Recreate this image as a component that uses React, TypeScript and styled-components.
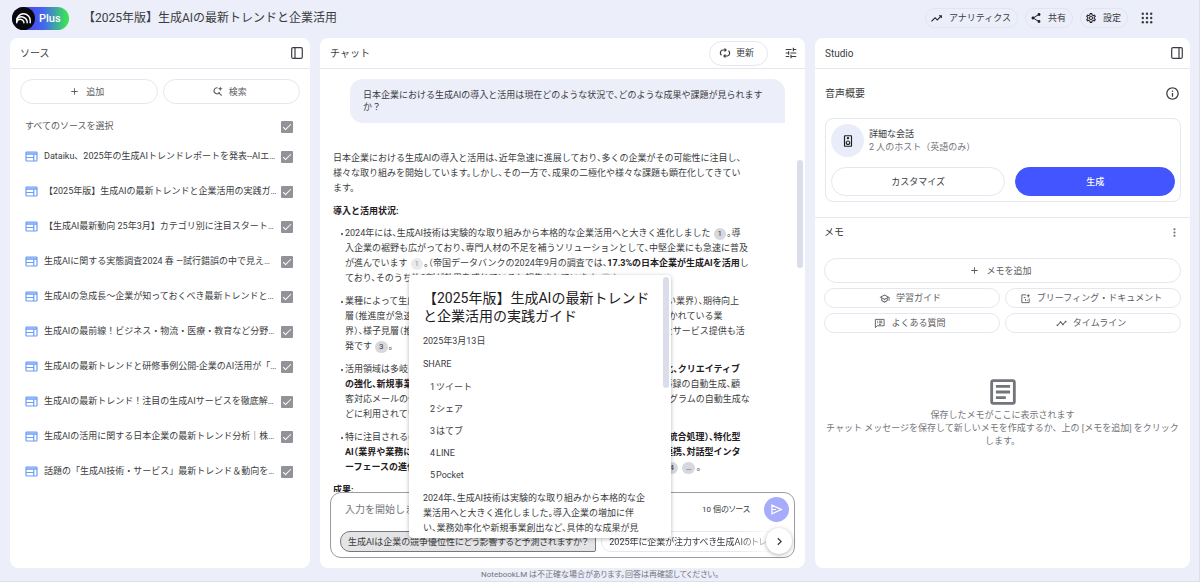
import React from "react";
import styled, { createGlobalStyle, css } from "styled-components";
import {
  MdAdd,
  MdChevronRight,
  MdInfoOutline,
  MdMoreVert,
  MdOutlineArticle,
  MdOutlineSchool,
  MdOutlineSettings,
  MdOutlineSpeaker,
  MdShare,
  MdTimeline,
  MdTrendingUp,
  MdTune,
} from "react-icons/md";

const color = {
  page: "#eceefa",
  panel: "#ffffff",
  line: "#e6e7ee",
  text: "#3b3c40",
  strong: "#1f2023",
  soft: "#5c5d61",
  muted: "#74757a",
  accent: "#4255ff",
  thumb: "#dbdeea",
};

const GlobalStyle = createGlobalStyle`
  *, *::before, *::after { box-sizing: border-box; }
  body {
    margin: 0;
    background: ${color.page};
    color: ${color.text};
    font-family: Roboto, "Noto Sans CJK JP", sans-serif;
    font-size: 9px;
    line-height: 15px;
  }
  button, input, textarea { font: inherit; color: inherit; font-feature-settings: inherit; }
  h1, h2, h3, p, ul, ol { margin: 0; padding: 0; font-weight: 400; }
  ul, ol { list-style: none; }
  svg { display: block; flex: none; }
`;

/* Running text sets its punctuation at half width. */
const compactPunctuation = css`
  font-feature-settings: "halt";
`;

const Page = styled.div`
  display: flex;
  flex-direction: column;
  height: 100vh;
  padding: 0 9px 0 10px;
  border-right: 1px solid #dddfe9;
  border-bottom: 1px solid #dddfe9;
`;

const TopBar = styled.header`
  display: flex;
  align-items: center;
  flex: none;
  height: 38px;
  padding: 0 37px 2px 2px;
`;

const Brand = styled.div`
  display: flex;
  align-items: center;
  width: 57px;
  height: 23px;
  border-radius: 12px;
  background: linear-gradient(90deg, #4a4ff0 35%, #4566ee 55%, #3ea3a8 75%, #3be05a 95%);
  color: #fff;
  font-size: 11px;
  font-weight: 500;
  gap: 4px;
`;

const Title = styled.h1`
  flex: 1;
  margin-left: 14px;
  font-size: 12px;
  line-height: 18px;
`;

const TopActions = styled.div`
  display: flex;
  align-items: center;
  gap: 7px;
`;

const IconButton = styled.button`
  display: grid;
  place-items: center;
  padding: 0;
  border: 0;
  background: none;
  cursor: pointer;
`;

const AppsButton = styled(IconButton)`
  margin-left: 6px;
`;

const Pill = styled.button<{ $height?: number; $tint?: boolean; $soft?: boolean }>`
  display: flex;
  align-items: center;
  justify-content: center;
  gap: 6px;
  height: ${(p) => p.$height ?? 25}px;
  padding: 0 8px 0 4px;
  border: 1px solid ${(p) => (p.$tint ? "#e2e4f1" : color.line)};
  border-radius: 15px;
  background: ${(p) => (p.$tint ? "transparent" : color.panel)};
  color: ${(p) => (p.$soft ? color.soft : color.text)};
  line-height: 12px;
  white-space: nowrap;
  cursor: pointer;
`;

const TopPill = styled(Pill)`
  padding: 0 6px 0 4px;

  svg { color: ${color.strong}; }
`;

const RefreshPill = styled(Pill)`
  gap: 5px;
  padding: 0 13px 0 9px;
`;

const Columns = styled.main`
  display: grid;
  grid-template-columns: 300fr 485fr 375fr;
  gap: 10px;
  flex: 1;
  min-height: 0;
`;

const Panel = styled.section`
  position: relative;
  display: flex;
  flex-direction: column;
  min-width: 0;
  min-height: 0;
  border-radius: 8px;
  background: ${color.panel};
`;

const PanelHeader = styled.header`
  display: flex;
  align-items: center;
  flex: none;
  gap: 16px;
  height: 31px;
  padding: 0 7px 0 10px;
  border-bottom: 1px solid ${color.line};
`;

const PanelTitle = styled.h2`
  flex: 1;
  font-size: 10px;
  color: ${color.text};
`;

const SourceActions = styled.div`
  display: grid;
  grid-template-columns: 1fr 1fr;
  gap: 5px;
  padding: 10px 10px 0;
`;

const SourceLabel = styled.label`
  display: flex;
  align-items: center;
  height: 35px;
  padding: 0 17px 0 15px;

  svg { margin-right: 6px; }
`;

const SelectAll = styled(SourceLabel)`
  height: 25px;
  margin-top: 10px;
  color: ${color.soft};
`;

const SourceName = styled.span`
  flex: 1;
  overflow: hidden;
  white-space: nowrap;
`;

const Check = styled.input`
  display: grid;
  place-items: center;
  flex: none;
  width: 12px;
  height: 12px;
  margin: 0;
  border-radius: 1px;
  appearance: none;
  background: #929398;

  &:checked::after {
    content: "";
    width: 8px;
    height: 4px;
    margin-top: -2px;
    border-left: 1px solid #fff;
    border-bottom: 1px solid #fff;
    transform: rotate(-45deg);
  }
`;

const ChatScroll = styled.div`
  flex: 1;
  min-height: 0;
  overflow: hidden;
  padding: 10px 20px 0 13px;
  ${compactPunctuation}
`;

const UserMessage = styled.p`
  margin-left: 17px;
  padding: 10px 13px;
  border-radius: 13px 13px 1px 13px;
  background: ${color.page};
  line-height: 12px;
  white-space: nowrap;
`;

const Answer = styled.div`
  display: flex;
  flex-direction: column;
  gap: 8px;
  margin-top: 28px;
  color: ${color.text};
  white-space: nowrap;

  strong, h3 {
    font-size: 9px;
    font-weight: 700;
    color: ${color.strong};
  }
`;

const Bullets = styled.ul`
  display: flex;
  flex-direction: column;
  gap: 8px;
  margin-top: -1px;
`;

const Bullet = styled.li`
  display: grid;
  grid-template-columns: 4px 1fr;
  padding-left: 8px;

  &::before {
    content: "";
    width: 2px;
    height: 2px;
    margin-top: 7px;
    border-radius: 1px;
    background: ${color.text};
  }
`;

const Cite = styled.sup<{ $faded?: boolean }>`
  display: inline-block;
  min-width: 12px;
  height: 12px;
  margin: 0 1px 0 3px;
  padding: 0 4px;
  border-radius: 6px;
  background: ${(p) => (p.$faded ? "#e9eaec" : "#d7d8de")};
  color: ${(p) => (p.$faded ? "#9a9ba0" : color.text)};
  font-size: 8px;
  line-height: 12px;
  text-align: center;
  vertical-align: middle;
`;

const ScrollThumb = styled.div<{ $top: number; $height: number; $right: number }>`
  position: absolute;
  top: ${(p) => p.$top}px;
  right: ${(p) => p.$right}px;
  width: 6px;
  height: ${(p) => p.$height}px;
  border-radius: 3px;
  background: ${color.thumb};
`;

const Composer = styled.form`
  display: flex;
  flex-direction: column;
  justify-content: space-between;
  flex: none;
  height: 66px;
  margin: 0 10px 10px;
  padding: 4px 0 5px;
  border: 1px solid #9b9ca1;
  border-radius: 11px;
  background: ${color.panel};
`;

const ComposerRow = styled.div`
  display: flex;
  align-items: center;
  gap: 14px;
  padding: 0 5px 0 14px;
`;

const PromptInput = styled.input`
  flex: 1;
  min-width: 0;
  padding: 0;
  border: 0;
  outline: 0;
  font-size: 10px;
  background: none;

  &::placeholder { color: ${color.muted}; }
`;

const SourceCount = styled.span`
  font-size: 8px;
  font-feature-settings: "palt";
`;

const SendButton = styled(IconButton)`
  width: 25px;
  height: 25px;
  border-radius: 50%;
  background: #a7abfb;
  color: #fff;
`;

const Suggestions = styled.div`
  position: relative;
  display: flex;
  gap: 5px;
  margin: 0 1px 0 9px;
  font-feature-settings: "palt";
`;

const Suggestion = styled.button<{ $active?: boolean }>`
  flex: none;
  height: 21px;
  padding: 0 7px;
  border: 1px solid ${color.line};
  border-radius: 10px;
  background: ${color.panel};
  line-height: 12px;
  white-space: nowrap;
  cursor: pointer;

  ${(p) =>
    p.$active &&
    css`
      border-color: #77787d;
      border-radius: 10px 2px 2px 10px;
      background: #e4e4e6;
    `}
`;

const SuggestionClip = styled.div`
  display: flex;
  flex: 1;
  min-width: 0;
  overflow: hidden;
  mask-image: linear-gradient(90deg, #000 70%, transparent 92%);
`;

const NextButton = styled(IconButton)`
  position: absolute;
  right: 1px;
  top: -3px;
  width: 26px;
  height: 26px;
  border-radius: 50%;
  background: ${color.panel};
  box-shadow: 0 1px 4px rgba(0, 0, 0, 0.3);
`;

const Popover = styled.aside`
  position: absolute;
  left: 89px;
  top: 237px;
  width: 262px;
  height: 263px;
  padding: 14px 14px 0;
  overflow: hidden;
  border-radius: 4px;
  background: ${color.panel};
  box-shadow: 0 1px 4px rgba(0, 0, 0, 0.28);
  white-space: nowrap;
`;

const PopoverTitle = styled.h3`
  margin-bottom: 9px;
  font-size: 14px;
  line-height: 18px;
  color: ${color.strong};
`;

const PopoverBody = styled.div`
  display: flex;
  flex-direction: column;
  gap: 8px;
  ${compactPunctuation}
`;

const ShareList = styled.ol`
  display: flex;
  flex-direction: column;
  gap: 7px;
  padding-left: 7px;
`;

const ShareItem = styled.li`
  display: flex;
  gap: 1px;
`;

const Overview = styled.div`
  flex: none;
  padding: 17px 9px 15px 10px;
  border-bottom: 1px solid ${color.line};
`;

const SectionHead = styled.div<{ $inset?: number }>`
  display: flex;
  align-items: center;
  justify-content: space-between;
  padding-right: ${(p) => p.$inset ?? 0}px;
`;

const AudioCard = styled.div`
  display: flex;
  flex-direction: column;
  gap: 10px;
  margin-top: 17px;
  padding: 5px;
  border: 1px solid ${color.line};
  border-radius: 8px;
`;

const AudioInfo = styled.div`
  display: flex;
  align-items: center;
  gap: 5px;
  line-height: 13px;
`;

const AudioBadge = styled.div`
  display: grid;
  place-items: center;
  width: 33px;
  height: 33px;
  border-radius: 50%;
  background: #e9edf9;
  color: ${color.strong};
`;

const AudioMeta = styled.p`
  color: ${color.muted};
`;

const AudioButtons = styled.div`
  display: grid;
  grid-template-columns: 175fr 160fr;
  gap: 10px;
`;

const WidePill = styled(Pill)`
  padding: 0 4px;
`;

const PrimaryPill = styled(WidePill)`
  border-color: ${color.accent};
  background: ${color.accent};
  color: #fff;
  font-weight: 500;
`;

const Notes = styled.div`
  display: flex;
  flex-direction: column;
  padding: 7px 9px 0;
`;

const NoteButtons = styled.div`
  display: grid;
  grid-template-columns: 1fr 1fr;
  gap: 5px;
  margin-top: 18px;
`;

const AddNote = styled(Pill)`
  grid-column: 1 / -1;
`;

const EmptyNotes = styled.div`
  display: flex;
  flex-direction: column;
  align-items: center;
  margin-top: 42px;
  color: ${color.muted};
  line-height: 13px;
  text-align: center;
  white-space: nowrap;
`;

const Disclaimer = styled.footer`
  flex: none;
  height: 13px;
  font-size: 8px;
  line-height: 14px;
  text-align: center;
  color: ${color.muted};
  font-feature-settings: "palt";
`;

const LogoMark = () => (
  <svg width="23" height="23" viewBox="0 0 24 24" fill="none" stroke="#fff" strokeWidth="1.5" strokeLinecap="round">
    <circle cx="12" cy="12" r="12" fill="#08090c" stroke="none" />
    <path d="M5 16.500v-2.500a7 7 0 0 1 14 0v2.500" />
    <path d="M5 12.500a6.200 6.200 0 0 1 10.800 2.500v1.500" />
    <path d="M5 15a4 4 0 0 1 7.400 .8v.7" />
  </svg>
);

const PanelIcon = ({ side }: { side: "left" | "right" }) => (
  <svg width="12" height="12" viewBox="0 0 12 12" fill="none" stroke="#3b3c40" strokeWidth="1.2">
    <rect x="0.7" y="0.7" width="10.6" height="10.6" rx="1.2" />
    <path d={side === "left" ? "M4 1v10" : "M8 1v10"} />
  </svg>
);

const AppsIcon = () => (
  <svg width="12" height="12" viewBox="0 0 12 12" fill="#3b3c40">
    {[1.8, 6, 10.2].map((y) => [1.8, 6, 10.2].map((x) => <circle key={`${x}-${y}`} cx={x} cy={y} r="1.2" />))}
  </svg>
);

const WebIcon = () => (
  <svg width="13" height="13" viewBox="0 0 26 26" fill="none" stroke="#6b9df5" strokeWidth="2.4">
    <rect x="2" y="4" width="22" height="18" rx="1.500" />
    <path d="M2 6h22M2 8.500h22" />
    <path d="M2 15h15M17.500 9v13" />
  </svg>
);

const SparkSearchIcon = () => (
  <svg width="11" height="11" viewBox="0 0 24 24" fill="none" stroke="currentColor" strokeWidth="2.4">
    <path d="M12 4a6.5 6.5 0 1 0 4.600 9.500M14 14l7 7" />
    <path d="M18 1l1.400 3.600L23 6l-3.600 1.400L18 11l-1.400-3.600L13 6l3.600-1.400z" fill="currentColor" stroke="none" />
  </svg>
);

const RefreshIcon = () => (
  <svg width="12" height="12" viewBox="0 0 24 24" fill="none" stroke="currentColor" strokeWidth="2.4">
    <path d="M5 16.500A6 6 0 0 1 7 6h5M19 7.500A6 6 0 0 1 17 18h-5" />
    <path d="M11 1.500l5 4.500-5 4.500zM13 13.500l-5 4.500 5 4.500z" fill="currentColor" stroke="none" />
  </svg>
);

const SendIcon = () => (
  <svg width="13" height="13" viewBox="0 0 24 24" fill="none" stroke="currentColor" strokeWidth="2.2">
    <path d="M3.500 4L21 12 3.500 20zM3.500 12H11" />
  </svg>
);

const BriefIcon = () => (
  <svg width="11" height="11" viewBox="0 0 24 24" fill="none" stroke="currentColor" strokeWidth="2">
    <path d="M13 4H4v17h16v-9M8 10h4M12 17v-4M16 17v-2" />
    <path d="M18 1l1.300 3.700L23 6l-3.700 1.300L18 11l-1.300-3.700L13 6l3.700-1.300z" fill="currentColor" stroke="none" />
  </svg>
);

const FaqIcon = () => (
  <svg width="11" height="11" viewBox="0 0 24 24" fill="none" stroke="currentColor" strokeWidth="2">
    <path d="M3 21V3h19v14H7zM7 7h2M11 7h7M7 10.500h2M11 10.500h7M11 14h4" />
  </svg>
);

const sources = [
  "Dataiku、2025年の生成AIトレンドレポートを発表--AIエ…",
  "【2025年版】生成AIの最新トレンドと企業活用の実践ガ…",
  "【生成AI最新動向 25年3月】カテゴリ別に注目スタート…",
  "生成AIに関する実態調査2024 春 ―試行錯誤の中で見え…",
  "生成AIの急成長～企業が知っておくべき最新トレンドと…",
  "生成AIの最前線！ビジネス・物流・医療・教育など分野…",
  "生成AIの最新トレンドと研修事例公開-企業のAI活用が「…",
  "生成AIの最新トレンド！注目の生成AIサービスを徹底解…",
  "生成AIの活用に関する日本企業の最新トレンド分析｜株…",
  "話題の「生成AI技術・サービス」最新トレンド＆動向を…",
];

const shares = ["ツイート", "シェア", "はてブ", "LINE", "Pocket"];

const SourcesPanel = () => (
  <Panel>
    <PanelHeader>
      <PanelTitle>ソース</PanelTitle>
      <IconButton aria-label="ソースを閉じる"><PanelIcon side="left" /></IconButton>
    </PanelHeader>
    <SourceActions>
      <Pill $soft><MdAdd size={11} />追加</Pill>
      <Pill $soft><SparkSearchIcon />検索</Pill>
    </SourceActions>
    <SelectAll>
      <SourceName>すべてのソースを選択</SourceName>
      <Check type="checkbox" defaultChecked />
    </SelectAll>
    <ul>
      {sources.map((name) => (
        <li key={name}>
          <SourceLabel>
            <WebIcon />
            <SourceName>{name}</SourceName>
            <Check type="checkbox" defaultChecked />
          </SourceLabel>
        </li>
      ))}
    </ul>
  </Panel>
);

const ChatPanel = () => (
  <Panel>
    <PanelHeader>
      <PanelTitle>チャット</PanelTitle>
      <RefreshPill><RefreshIcon />更新</RefreshPill>
      <IconButton aria-label="チャットの設定"><MdTune size={14} /></IconButton>
    </PanelHeader>
    <ChatScroll>
      <UserMessage>
        日本企業における生成AIの導入と活用は現在どのような状況で、どのような成果や課題が見られます<br />か？
      </UserMessage>
      <Answer>
        <p>
          日本企業における生成AIの導入と活用は、近年急速に進展しており、多くの企業がその可能性に注目し、<br />
          様々な取り組みを開始しています。しかし、その一方で、成果の二極化や様々な課題も顕在化してきてい<br />
          ます。
        </p>
        <h3>導入と活用状況:</h3>
        <Bullets>
          <Bullet>
            <div>
              2024年には、生成AI技術は実験的な取り組みから本格的な企業活用へと大きく進化しました<Cite>1</Cite>。導<br />
              入企業の裾野も広がっており、専門人材の不足を補うソリューションとして、中堅企業にも急速に普及<br />
              が進んでいます<Cite $faded>1</Cite>。（帝国データバンクの2024年9月の調査では、<strong>17.3%の日本企業が生成AIを活用</strong>し<br />
              ており、そのうち約9割が効果を感じていると報告されています<Cite>2</Cite>）。
            </div>
          </Bullet>
          <Bullet>
            <div>
              業種によって生成AIの導入状況は異なり、先行層（推進度が高くて市場の期待も高い業界）、期待向上<br />
              層（推進度が急速に高まる業界）、二極化層（活用度合いの差により期待度が引き裂かれている業<br />
              界）、様子見層（推進度も期待も低い業界群）に分類されて、さらに各業界に特化したサービス提供も活<br />
              発です<Cite>3</Cite>。
            </div>
          </Bullet>
          <Bullet>
            <div>
              活用領域は多岐にわたり、<strong>業務の効率化、顧客体験の向上、意思決定の迅速な高度化、クリエイティブ</strong><br />
              <strong>の強化、新規事業の創出</strong>など多くの業務領域が挙げられます。より具体的には、議事録の自動生成、顧<br />
              客対応メールの作成、広告作成、膨大な社内文書の検索や要約、多言語の翻訳、プログラムの自動生成な<br />
              どに利用されています。
            </div>
          </Bullet>
          <Bullet>
            <div>
              特に注目されるのは、<strong>マルチモーダルAI（静止画や音声、動画、テキスト情報などの統合処理）、特化型</strong><br />
              <strong>AI（業界や業務に特化した高精度なモデル）、自律型エージェントや外部ツール間連携、対話型インタ</strong><br />
              <strong>ーフェースの進化</strong>など、企業活用を支える新しい技術の動きが見られることです<Cite>4</Cite><Cite>…</Cite>。
            </div>
          </Bullet>
        </Bullets>
        <h3>成果:</h3>
      </Answer>
    </ChatScroll>
    <Composer onSubmit={(e) => e.preventDefault()}>
      <ComposerRow>
        <PromptInput aria-label="メッセージ" placeholder="入力を開始します…" />
        <SourceCount>10 個のソース</SourceCount>
        <SendButton aria-label="送信"><SendIcon /></SendButton>
      </ComposerRow>
      <Suggestions>
        <Suggestion type="button" $active>生成AIは企業の競争優位性にどう影響すると予測されますか？</Suggestion>
        <SuggestionClip>
          <Suggestion type="button">2025年に企業が注力すべき生成AIのトレンド</Suggestion>
        </SuggestionClip>
        <NextButton type="button" aria-label="次へ"><MdChevronRight size={15} /></NextButton>
      </Suggestions>
    </Composer>
    <ScrollThumb $top={122} $height={108} $right={2} />
    <Popover>
      <PopoverTitle>【2025年版】生成AIの最新トレンド<br />と企業活用の実践ガイド</PopoverTitle>
      <PopoverBody>
        <p>2025年3月13日</p>
        <p>SHARE</p>
        <ShareList>
          {shares.map((label, i) => (
            <ShareItem key={label}><span>{i + 1}</span><span>{label}</span></ShareItem>
          ))}
        </ShareList>
        <p>
          2024年、生成AI技術は実験的な取り組みから本格的な企<br />
          業活用へと大きく進化しました。導入企業の増加に伴<br />
          い、業務効率化や新規事業創出など、具体的な成果が見
        </p>
      </PopoverBody>
      <ScrollThumb $top={2} $height={111} $right={2} />
    </Popover>
  </Panel>
);

const StudioPanel = () => (
  <Panel>
    <PanelHeader>
      <PanelTitle>Studio</PanelTitle>
      <IconButton aria-label="Studio を閉じる"><PanelIcon side="right" /></IconButton>
    </PanelHeader>
    <Overview>
      <SectionHead $inset={1}>
        <PanelTitle as="h3">音声概要</PanelTitle>
        <IconButton aria-label="詳細"><MdInfoOutline size={15} /></IconButton>
      </SectionHead>
      <AudioCard>
        <AudioInfo>
          <AudioBadge><MdOutlineSpeaker size={14} /></AudioBadge>
          <div>
            <p>詳細な会話</p>
            <AudioMeta>2 人のホスト（英語のみ）</AudioMeta>
          </div>
        </AudioInfo>
        <AudioButtons>
          <WidePill $height={29}>カスタマイズ</WidePill>
          <PrimaryPill $height={29}>生成</PrimaryPill>
        </AudioButtons>
      </AudioCard>
    </Overview>
    <Notes>
      <SectionHead>
        <PanelTitle as="h3">メモ</PanelTitle>
        <IconButton aria-label="その他"><MdMoreVert size={13} color={color.muted} /></IconButton>
      </SectionHead>
      <NoteButtons>
        <AddNote $soft><MdAdd size={11} />メモを追加</AddNote>
        <Pill $soft $height={20}><MdOutlineSchool size={11} />学習ガイド</Pill>
        <Pill $soft $height={20}><BriefIcon />ブリーフィング・ドキュメント</Pill>
        <Pill $soft $height={20}><FaqIcon />よくある質問</Pill>
        <Pill $soft $height={20}><MdTimeline size={11} />タイムライン</Pill>
      </NoteButtons>
      <EmptyNotes>
        <MdOutlineArticle size={34} />
        <p>保存したメモがここに表示されます</p>
        <p>チャット メッセージを保存して新しいメモを作成するか、上の [メモを追加] をクリック<br />します。</p>
      </EmptyNotes>
    </Notes>
  </Panel>
);

const App = () => (
  <Page>
    <GlobalStyle />
    <TopBar>
      <Brand><LogoMark />Plus</Brand>
      <Title>【2025年版】生成AIの最新トレンドと企業活用</Title>
      <TopActions>
        <TopPill $tint $height={20}><MdTrendingUp size={13} />アナリティクス</TopPill>
        <TopPill $tint $height={20}><MdShare size={12} />共有</TopPill>
        <TopPill $tint $height={20}><MdOutlineSettings size={12} />設定</TopPill>
        <AppsButton aria-label="アプリ"><AppsIcon /></AppsButton>
      </TopActions>
    </TopBar>
    <Columns>
      <SourcesPanel />
      <ChatPanel />
      <StudioPanel />
    </Columns>
    <Disclaimer>NotebookLM は不正確な場合があります。回答は再確認してください。</Disclaimer>
  </Page>
);

export default App;
